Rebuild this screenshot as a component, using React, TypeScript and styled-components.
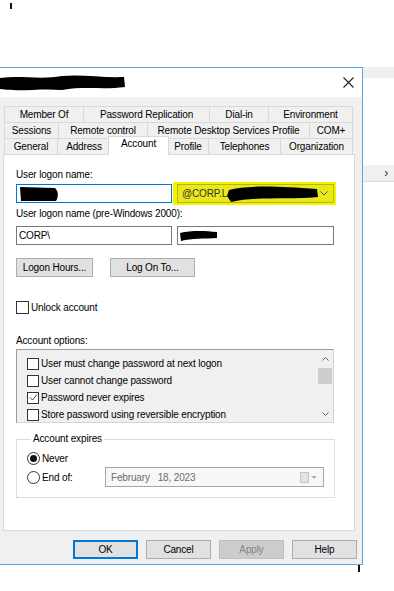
import styled, { createGlobalStyle } from "styled-components";

const GlobalStyle = createGlobalStyle`
  html, body {
    margin: 0;
    padding: 0;
    background: #fff;
  }
  body {
    font-family: "Liberation Sans", Arial, sans-serif;
    font-size: 10px;
    letter-spacing: -0.15px;
    color: #000;
    overflow: hidden;
  }
  * {
    box-sizing: border-box;
  }
`;

type TabDef = { label: string; width: number; active?: boolean };

const tabRows: TabDef[][] = [
  [
    { label: "Member Of", width: 79 },
    { label: "Password Replication", width: 126 },
    { label: "Dial-in", width: 59 },
    { label: "Environment", width: 85 },
  ],
  [
    { label: "Sessions", width: 54 },
    { label: "Remote control", width: 89 },
    { label: "Remote Desktop Services Profile", width: 162 },
    { label: "COM+", width: 44 },
  ],
  [
    { label: "General", width: 53 },
    { label: "Address", width: 53 },
    { label: "Account", width: 57, active: true },
    { label: "Profile", width: 41 },
    { label: "Telephones", width: 72 },
    { label: "Organization", width: 73 },
  ],
];

const accountOptions = [
  { label: "User must change password at next logon", checked: false },
  { label: "User cannot change password", checked: false },
  { label: "Password never expires", checked: true },
  { label: "Store password using reversible encryption", checked: false },
];

const Page = styled.div`
  position: relative;
  width: 394px;
  height: 591px;
  display: flex;
  flex-direction: column;
`;

const TopSpace = styled.div`
  height: 67px;
`;

const CursorMark = styled.span<{ $x: number; $y: number; $h: number }>`
  position: absolute;
  left: ${(p) => p.$x}px;
  top: ${(p) => p.$y}px;
  width: 2px;
  height: ${(p) => p.$h}px;
  background: #111;
`;

const Desk = styled.div`
  display: flex;
  align-items: flex-start;
`;

const Dialog = styled.div`
  width: 363px;
  border-top: 1px solid #5fa3e3;
  border-right: 1px solid #5fa3e3;
  border-bottom: 1px solid #5fa3e3;
  display: flex;
  flex-direction: column;
`;

const TitleBar = styled.div`
  height: 29px;
  background: #fff;
  display: flex;
  align-items: center;
  justify-content: space-between;
  padding-right: 8px;
`;

const Body = styled.div`
  background: #f0f0f0;
  padding: 9px 7px 5px 3px;
  display: flex;
  flex-direction: column;
`;

const TabStack = styled.div`
  padding-left: 1px;
  display: flex;
  flex-direction: column;
`;

const TabRow = styled.div`
  display: flex;
  height: 16px;
`;

const Tab = styled.div<{ $w: number; $active?: boolean }>`
  position: relative;
  width: ${(p) => (p.$active ? p.$w + 4 : p.$w)}px;
  height: ${(p) => (p.$active ? 19 : 16)}px;
  margin: ${(p) => (p.$active ? "-2px -2px -1px -2px" : "0")};
  z-index: ${(p) => (p.$active ? 2 : 1)};
  border: 1px solid #d9d9d9;
  border-right: none;
  border-bottom: none;
  background: ${(p) => (p.$active ? "#fff" : "#f0f0f0")};
  text-align: center;
  line-height: ${(p) => (p.$active ? 14 : 15)}px;
  white-space: nowrap;
  &:last-child {
    border-right: 1px solid #d9d9d9;
  }
  ${(p) => (p.$active ? "border-right: 1px solid #d9d9d9;" : "")}
`;

const Panel = styled.div`
  height: 377px;
  background: #fff;
  border: 1px solid #d9d9d9;
  padding-left: 12px;
  display: flex;
  flex-direction: column;
`;

const FieldLabel = styled.div<{ $mt: number }>`
  margin-top: ${(p) => p.$mt}px;
  line-height: 14px;
  height: 14px;
`;

const FieldRow = styled.div<{ $mt: number; $h: number }>`
  margin-top: ${(p) => p.$mt}px;
  height: ${(p) => p.$h}px;
  display: flex;
  align-items: stretch;
  gap: 5px;
`;

const TextBox = styled.div<{ $focused?: boolean; $w?: number }>`
  width: ${(p) => p.$w ?? 156}px;
  border: 1px solid ${(p) => (p.$focused ? "#0078d7" : "#7a7a7a")};
  background: #fff;
  padding-left: 2px;
  display: flex;
  align-items: center;
  overflow: hidden;
`;

const Highlight = styled.div`
  margin: -2px -2px -2px -4px;
  padding: 2px 2px 2px 4px;
  background: #f4f400;
  display: flex;
`;

const Combo = styled.div`
  width: 157px;
  border: 1px solid #b8b800;
  background: #e8e81a;
  padding-left: 4px;
  display: flex;
  align-items: center;
  overflow: hidden;
`;

const ComboText = styled.span`
  color: #333;
`;

const Chevron = styled.svg`
  margin-left: auto;
  margin-right: 5px;
`;

const ButtonRow = styled.div`
  margin-top: 13px;
  display: flex;
  gap: 17px;
`;

const PushButton = styled.div<{ $w: number; $variant?: "default" | "disabled" }>`
  width: ${(p) => p.$w}px;
  height: 19px;
  border: 1px solid
    ${(p) =>
      p.$variant === "default"
        ? "#0078d7"
        : p.$variant === "disabled"
        ? "#bfbfbf"
        : "#adadad"};
  box-shadow: ${(p) => (p.$variant === "default" ? "inset 0 0 0 1px #0078d7" : "none")};
  background: ${(p) => (p.$variant === "disabled" ? "#cccccc" : "#e1e1e1")};
  color: ${(p) => (p.$variant === "disabled" ? "#838383" : "#000")};
  display: flex;
  align-items: center;
  justify-content: center;
`;

const CheckRow = styled.div<{ $mt?: number; $h?: number }>`
  margin-top: ${(p) => p.$mt ?? 0}px;
  height: ${(p) => p.$h ?? 17}px;
  flex-shrink: 0;
  display: flex;
  align-items: center;
  gap: 2px;
  white-space: nowrap;
`;

const CheckBox = styled.span<{ $size: number }>`
  width: ${(p) => p.$size}px;
  height: ${(p) => p.$size}px;
  border: 1px solid #333;
  background: #fff;
  display: flex;
  align-items: center;
  justify-content: center;
  flex-shrink: 0;
`;

const ListBox = styled.div`
  margin-top: 1px;
  width: 318px;
  height: 74px;
  border: 1px solid #9c9c9c;
  border-right-color: #d4d4d4;
  border-bottom-color: #d4d4d4;
  background: #f0f0f0;
  display: flex;
  overflow: hidden;
`;

const ListItems = styled.div`
  flex: 1;
  padding: 5px 0 0 10px;
  display: flex;
  flex-direction: column;
  overflow: hidden;
`;

const ScrollBar = styled.div`
  width: 16px;
  display: flex;
  flex-direction: column;
  align-items: center;
`;

const ScrollArrow = styled.div`
  height: 17px;
  width: 100%;
  display: flex;
  align-items: center;
  justify-content: center;
`;

const ScrollThumb = styled.div`
  width: 14px;
  height: 16px;
  margin-top: 1px;
  background: #cdcdcd;
`;

const ScrollTrack = styled.div`
  flex: 1;
`;

const GroupBox = styled.fieldset`
  margin: 9px 0 0 0;
  width: 318px;
  height: 66px;
  border: 1px solid #dcdcdc;
  padding: 4px 10px 0 10px;
  display: flex;
  flex-direction: column;
`;

const Legend = styled.legend`
  margin-left: 4px;
  padding: 0 2px;
  line-height: 14px;
`;

const RadioRow = styled.div<{ $h: number }>`
  height: ${(p) => p.$h}px;
  display: flex;
  align-items: center;
`;

const Radio = styled.span<{ $on?: boolean }>`
  width: 13px;
  height: 13px;
  border-radius: 50%;
  border: 1px solid #333;
  background: #fff;
  display: flex;
  align-items: center;
  justify-content: center;
  flex-shrink: 0;
  &::after {
    content: "";
    display: ${(p) => (p.$on ? "block" : "none")};
    width: 7px;
    height: 7px;
    border-radius: 50%;
    background: #111;
  }
`;

const RadioLabel = styled.span<{ $w?: number }>`
  margin-left: 2px;
  width: ${(p) => (p.$w ? `${p.$w}px` : "auto")};
`;

const DatePicker = styled.div`
  width: 219px;
  height: 20px;
  border: 1px solid #a6a6a6;
  background: #f7f7f7;
  color: #6d6d6d;
  padding-left: 5px;
  display: flex;
  align-items: center;
  white-space: pre;
`;

const CalendarIcon = styled.span`
  margin-left: auto;
  width: 9px;
  height: 11px;
  border: 1px solid #c4c4c4;
  background: #e4e4e4;
`;

const DropTriangle = styled.span`
  margin: 0 6px 0 2px;
  width: 0;
  height: 0;
  border-left: 3px solid transparent;
  border-right: 3px solid transparent;
  border-top: 3px solid #b0b0b0;
`;

const Footer = styled.div`
  margin: 9px -2px 0 0;
  display: flex;
  justify-content: flex-end;
  gap: 8px;
`;

const RightStrip = styled.div`
  flex: 1;
  display: flex;
  flex-direction: column;
`;

const StripBar = styled.div<{ $mt: number; $h: number }>`
  margin-top: ${(p) => p.$mt}px;
  height: ${(p) => p.$h}px;
  background: #f0f0f0;
  display: flex;
  align-items: center;
  justify-content: flex-end;
  padding-right: 6px;
  font-size: 12px;
  color: #333;
`;

const StripRule = styled.div`
  height: 1px;
  background: #dadada;
`;

const Redaction = ({ w, h, d }: { w: number; h: number; d: string }) => (
  <svg width={w} height={h} viewBox={`0 0 ${w} ${h}`}>
    <path d={d} fill="#000" />
  </svg>
);

const CheckMark = () => (
  <svg width="9" height="9" viewBox="0 0 9 9">
    <path d="M1 4.5 L3.5 7 L8 1.5" stroke="#444" strokeWidth="1" fill="none" />
  </svg>
);

export default function App() {
  return (
    <>
      <GlobalStyle />
      <Page>
        <CursorMark $x={10} $y={3} $h={6} />
        <CursorMark $x={358} $y={565} $h={7} />
        <TopSpace />
        <Desk>
          <Dialog>
            <TitleBar>
              <Redaction
                w={126}
                h={20}
                d="M0 5 C20 2 40 7 62 3 C82 1 102 5 124 4 L125 14 C104 17 84 13 62 17 C40 15 20 19 0 16 Z"
              />
              <svg width="11" height="11" viewBox="0 0 11 11">
                <path d="M0.5 0.5 L10.5 10.5 M10.5 0.5 L0.5 10.5" stroke="#222" strokeWidth="1.1" />
              </svg>
            </TitleBar>
            <Body>
              <TabStack>
                {tabRows.map((row, i) => (
                  <TabRow key={i}>
                    {row.map((t) => (
                      <Tab key={t.label} $w={t.width} $active={t.active}>
                        {t.label}
                      </Tab>
                    ))}
                  </TabRow>
                ))}
              </TabStack>
              <Panel>
                <FieldLabel $mt={13}>User logon name:</FieldLabel>
                <FieldRow $mt={2} $h={19}>
                  <TextBox $focused>
                    <Redaction w={40} h={16} d="M1 1 L36 2 C39 5 40 10 37 15 L2 15 Z" />
                  </TextBox>
                  <Highlight>
                    <Combo>
                      <ComboText>@CORP.L</ComboText>
                      <Redaction
                        w={92}
                        h={19}
                        d="M2 6 C20 1 50 2 90 5 L91 13 C60 16 30 12 4 18 L0 12 Z"
                      />
                      <Chevron width="8" height="5" viewBox="0 0 8 5">
                        <path d="M0.5 0.5 L4 4 L7.5 0.5" stroke="#555" fill="none" />
                      </Chevron>
                    </Combo>
                  </Highlight>
                </FieldRow>
                <FieldLabel $mt={4}>User logon name (pre-Windows 2000):</FieldLabel>
                <FieldRow $mt={5} $h={19}>
                  <TextBox>CORP\</TextBox>
                  <TextBox $w={157}>
                    <Redaction w={38} h={12} d="M0 3 C12 0 26 1 37 2 L37 8 C24 9 12 8 1 11 Z" />
                  </TextBox>
                </FieldRow>
                <ButtonRow>
                  <PushButton $w={77}>Logon Hours...</PushButton>
                  <PushButton $w={85}>Log On To...</PushButton>
                </ButtonRow>
                <CheckRow $mt={23} $h={14}>
                  <CheckBox $size={13} />
                  Unlock account
                </CheckRow>
                <FieldLabel $mt={20}>Account options:</FieldLabel>
                <ListBox>
                  <ListItems>
                    {accountOptions.map((o) => (
                      <CheckRow key={o.label}>
                        <CheckBox $size={12}>{o.checked && <CheckMark />}</CheckBox>
                        {o.label}
                      </CheckRow>
                    ))}
                  </ListItems>
                  <ScrollBar>
                    <ScrollArrow>
                      <svg width="7" height="4" viewBox="0 0 7 4">
                        <path d="M0.5 3.5 L3.5 0.5 L6.5 3.5" stroke="#666" fill="none" />
                      </svg>
                    </ScrollArrow>
                    <ScrollThumb />
                    <ScrollTrack />
                    <ScrollArrow>
                      <svg width="7" height="4" viewBox="0 0 7 4">
                        <path d="M0.5 0.5 L3.5 3.5 L6.5 0.5" stroke="#666" fill="none" />
                      </svg>
                    </ScrollArrow>
                  </ScrollBar>
                </ListBox>
                <GroupBox>
                  <Legend>Account expires</Legend>
                  <RadioRow $h={17}>
                    <Radio $on />
                    <RadioLabel>Never</RadioLabel>
                  </RadioRow>
                  <RadioRow $h={20}>
                    <Radio />
                    <RadioLabel $w={63}>End of:</RadioLabel>
                    <DatePicker>
                      {"February   18, 2023"}
                      <CalendarIcon />
                      <DropTriangle />
                    </DatePicker>
                  </RadioRow>
                </GroupBox>
              </Panel>
              <Footer>
                <PushButton $w={65} $variant="default">OK</PushButton>
                <PushButton $w={65}>Cancel</PushButton>
                <PushButton $w={65} $variant="disabled">Apply</PushButton>
                <PushButton $w={65}>Help</PushButton>
              </Footer>
            </Body>
          </Dialog>
          <RightStrip>
            <StripBar $mt={0} $h={11} />
            <StripBar $mt={87} $h={16}>›</StripBar>
            <StripRule />
          </RightStrip>
        </Desk>
      </Page>
    </>
  );
}
